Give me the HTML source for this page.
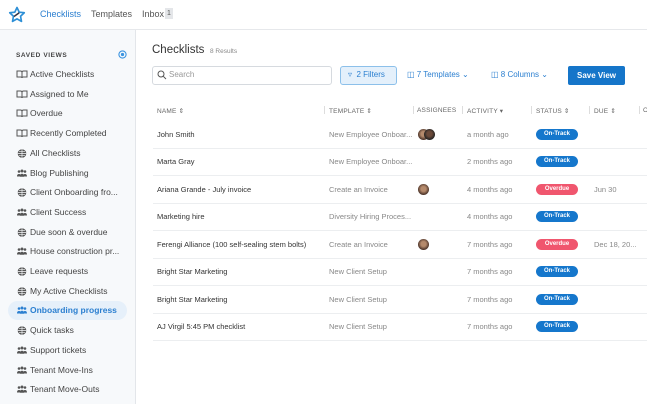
<!DOCTYPE html>
<html><head><meta charset="utf-8"><style>
*{box-sizing:border-box;margin:0;padding:0}
body{width:647px;height:404px;overflow:hidden;background:#fff;font-family:"Liberation Sans",sans-serif;color:#333;position:relative}
.a{position:absolute;white-space:nowrap}
.top{position:absolute;left:0;top:0;width:647px;height:30px;border-bottom:1px solid #e6e8eb;background:#fff}
.side{position:absolute;left:0;top:30px;width:136px;height:374px;background:#f7f9fb;border-right:1px solid #e3e6ea}
.si{position:absolute;left:16px;width:115px;font-size:8.5px;color:#444;height:18px;line-height:18px;white-space:nowrap}
.si svg{position:absolute;left:0;top:4px}
.si span{position:absolute;left:14px;white-space:nowrap}
.sel{position:absolute;left:8px;top:301px;width:119px;height:19px;background:#e6f0fa;border-radius:10px}
.hd{font-size:6.5px;color:#666;letter-spacing:.2px;top:107px}
.row{position:absolute;left:153px;width:494px;height:1px;background:#eceef0}
.c{font-size:7.5px;color:#333}
.g{color:#888}
.pill{position:absolute;width:42px;height:11px;border-radius:6px;color:#fff;font-size:6px;font-weight:bold;text-align:center;line-height:11px}
.on{background:#1577cc}.ov{background:#f0566e}
.av{position:absolute;width:11px;height:11px;border-radius:50%;background:radial-gradient(circle at 50% 45%,#b58a6c 30%,#4a3228 70%)}
.sep{position:absolute;top:106px;width:1px;height:8px;background:#ddd}
</style></head><body>
<div class="top">
<svg class="a" style="left:8px;top:6px" width="18" height="18" viewBox="0 0 24 24"><path d="M12 2l2.9 6.2 6.8.8-5 4.7 1.3 6.8L12 17.2 6 20.5l1.3-6.8-5-4.7 6.8-.8z" fill="none" stroke="#2d8fd6" stroke-width="2.2" stroke-linejoin="round"/><path d="M8 14l7-5" stroke="#334" stroke-width="2"/></svg>
<div class="a" style="left:40px;top:9px;font-size:9px;color:#2b7fd0">Checklists</div>
<div class="a" style="left:91px;top:9px;font-size:9px;color:#555">Templates</div>
<div class="a" style="left:142px;top:9px;font-size:9px;color:#555">Inbox</div>
<div class="a" style="left:165px;top:8px;width:8px;height:11px;background:#e4e6e9;font-size:7px;text-align:center;line-height:11px;color:#555">1</div>
</div>
<div class="side">
<div class="a" style="left:16px;top:22px;font-size:6.5px;font-weight:bold;color:#444;letter-spacing:.6px">SAVED VIEWS</div>
<svg class="a" style="left:118px;top:20px" width="9" height="9" viewBox="0 0 10 10"><circle cx="5" cy="5" r="4" fill="none" stroke="#3a93e0" stroke-width="1.2"/><circle cx="5" cy="5" r="1.8" fill="#3a93e0"/></svg>
</div>
<div class="sel"></div>
<div id="sb"></div>
<div class="a" style="left:152px;top:44px;font-size:11.5px;color:#333">Checklists</div>
<div class="a" style="left:210px;top:48px;font-size:6.5px;color:#888">8 Results</div>
<div class="a" style="left:152px;top:66px;width:180px;height:19px;border:1px solid #d6dadf;border-radius:3px"></div>
<svg class="a" style="left:157px;top:70px" width="10" height="10" viewBox="0 0 10 10"><circle cx="4" cy="4" r="3" fill="none" stroke="#555" stroke-width="1"/><path d="M6.3 6.3L9 9" stroke="#555" stroke-width="1"/></svg>
<div class="a" style="left:169px;top:70px;font-size:8px;color:#999">Search</div>
<div class="a" style="left:340px;top:66px;width:57px;height:19px;border:1px solid #8cc0ea;background:#e4f0fb;border-radius:3px"></div>
<div class="a" style="left:348px;top:70px;font-size:8px;color:#2b7fd0">&#9663;&nbsp; 2 Filters</div>
<div class="a" style="left:407px;top:70px;font-size:8px;color:#2b7fd0">&#9707; 7 Templates &#8964;</div>
<div class="a" style="left:491px;top:70px;font-size:8px;color:#2b7fd0">&#9707; 8 Columns &#8964;</div>
<div class="a" style="left:568px;top:66px;width:57px;height:19px;background:#1575c9;border-radius:2px;color:#fff;font-size:8px;font-weight:bold;text-align:center;line-height:19px">Save View</div>
<div class="a hd" style="left:157px">NAME &#8661;</div>
<div class="sep" style="left:324px"></div><div class="a hd" style="left:329px">TEMPLATE &#8661;</div>
<div class="sep" style="left:413px"></div><div class="a hd" style="left:417px">ASSIGNEES</div>
<div class="sep" style="left:462px"></div><div class="a hd" style="left:467px">ACTIVITY &#9662;</div>
<div class="sep" style="left:531px"></div><div class="a hd" style="left:536px">STATUS &#8661;</div>
<div class="sep" style="left:589px"></div><div class="a hd" style="left:594px">DUE &#8661;</div>
<div class="sep" style="left:639px"></div><div class="a hd" style="left:643px">C</div>
<div id="rows"></div>
<script>
var side=[["b","Active Checklists"],["b","Assigned to Me"],["b","Overdue"],["b","Recently Completed"],["g","All Checklists"],["p","Blog Publishing"],["g","Client Onboarding fro..."],["p","Client Success"],["g","Due soon & overdue"],["p","House construction pr..."],["g","Leave requests"],["g","My Active Checklists"],["p","Onboarding progress"],["g","Quick tasks"],["p","Support tickets"],["p","Tenant Move-Ins"],["p","Tenant Move-Outs"]];
var ic={b:'<path d="M1 2h3.5c.8 0 1.5.6 1.5 1.4V9c0-.6-.6-1-1.3-1H1zM11 2H7.5C6.7 2 6 2.6 6 3.4V9c0-.6.6-1 1.3-1H11z" fill="none" stroke="#555" stroke-width="1"/>',g:'<circle cx="6" cy="5.5" r="4.3" fill="#555"/><path d="M1.7 5.5h8.6M6 1.2v8.6M3 3.3h6M3 7.7h6" stroke="#f7f9fb" stroke-width=".7"/>',p:'<circle cx="3" cy="3.5" r="1.3" fill="C"/><circle cx="6" cy="3" r="1.5" fill="C"/><circle cx="9" cy="3.5" r="1.3" fill="C"/><path d="M1 8.5c0-2 1-2.5 2-2.5s2 .5 2 2.5zM4 8.8c0-2.3 1-3 2-3s2 .7 2 3zM7 8.5c0-2 1-2.5 2-2.5s2 .5 2 2.5z" fill="C"/>'};
var h="";side.forEach(function(s,i){var y=65+i*19.7;var sel=i==12;var col=sel?"#2b7fd0":"#555";h+='<div class="si" style="top:'+y+'px;'+(sel?'color:#2b7fd0;font-weight:bold':'')+'"><svg width="12" height="11" viewBox="0 0 12 11">'+ic[s[0]].replace(/C"/g,col+'"').replace(/#555/g,col)+'</svg><span>'+s[1]+'</span></div>';});
document.getElementById("sb").innerHTML=h;
var rows=[["John Smith","New Employee Onboar...",2,"a month ago","on",""],["Marta Gray","New Employee Onboar...",0,"2 months ago","on",""],["Ariana Grande - July invoice","Create an Invoice",1,"4 months ago","ov","Jun 30"],["Marketing hire","Diversity Hiring Proces...",0,"4 months ago","on",""],["Ferengi Alliance (100 self-sealing stem bolts)","Create an Invoice",1,"7 months ago","ov","Dec 18, 20..."],["Bright Star Marketing","New Client Setup",0,"7 months ago","on",""],["Bright Star Marketing","New Client Setup",0,"7 months ago","on",""],["AJ Virgil 5:45 PM checklist","New Client Setup",0,"7 months ago","on",""]];
h="";rows.forEach(function(r,i){var y=129.5+i*27.5;
h+='<div class="a c" style="left:157px;top:'+y+'px">'+r[0]+'</div><div class="a c g" style="left:329px;top:'+y+'px">'+r[1]+'</div><div class="a c g" style="left:467px;top:'+y+'px">'+r[3]+'</div><div class="pill '+r[4]+'" style="left:536px;top:'+(y-1)+'px">'+(r[4]=="on"?"On-Track":"Overdue")+'</div><div class="a c g" style="left:594px;top:'+y+'px">'+r[5]+'</div><div class="row" style="top:'+(y+18)+'px"></div>';
if(r[2]>=1)h+='<div class="av" style="left:418px;top:'+(y-1)+'px"></div>';if(r[2]==2)h+='<div class="av" style="left:424px;top:'+(y-1)+'px;background:radial-gradient(circle at 50% 45%,#6b4a3a 30%,#222 70%)"></div>';});
document.getElementById("rows").innerHTML=h;
</script>
</body></html>
